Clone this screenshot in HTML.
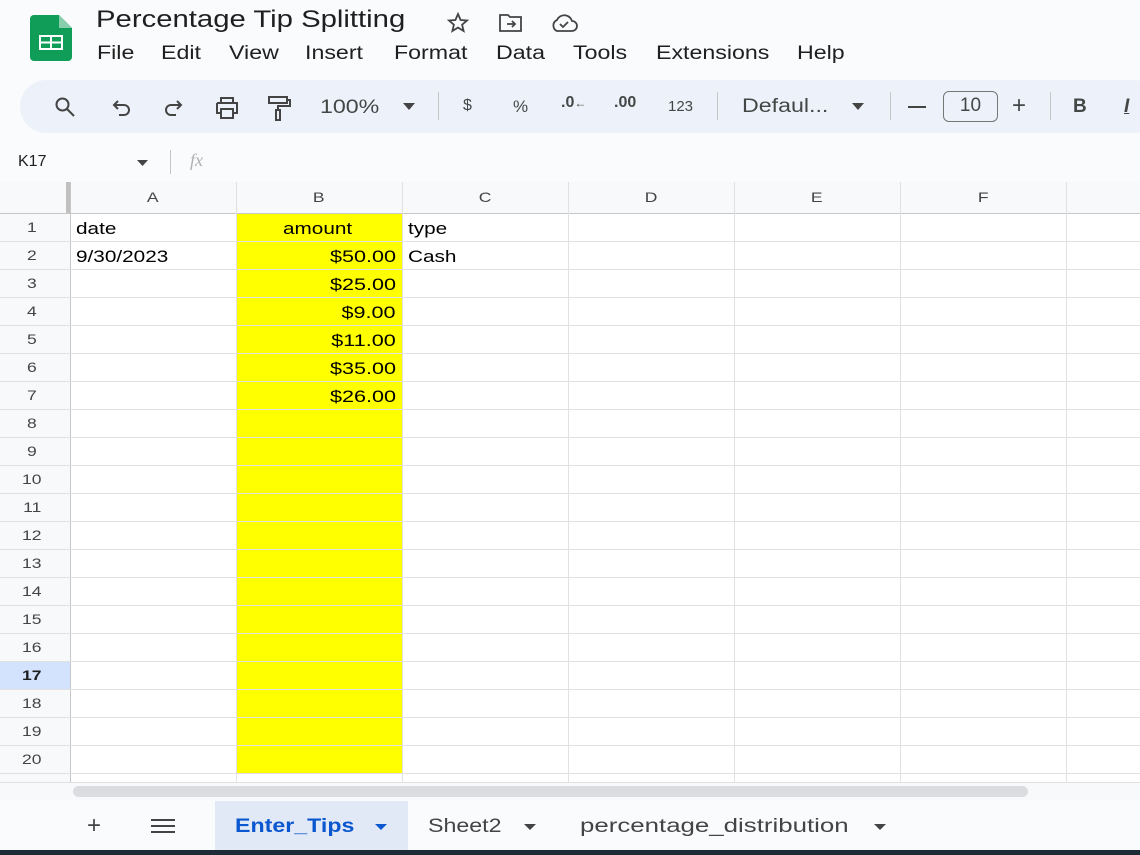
<!DOCTYPE html>
<html><head><meta charset="utf-8"><style>
*{margin:0;padding:0;box-sizing:border-box}
body{width:1140px;height:855px;overflow:hidden;background:#f9fbfd;font-family:"Liberation Sans",Arial,sans-serif;color:#1f1f1f;position:relative}
.abs{position:absolute;white-space:nowrap}
.s{display:inline-block;transform:scaleX(1.22);transform-origin:left center}
.sr{display:inline-block;transform:scaleX(1.27);transform-origin:right center}
.sc{display:inline-block;transform:scaleX(1.25);transform-origin:center center}
.title{left:96px;top:6px;font-size:24px;color:#1f1f1f}
.menu{top:43px;font-size:19px;color:#1f1f1f}
.pill{left:20px;top:80px;width:1140px;height:53px;background:#edf2fa;border-radius:27px}
.tb{top:94px;font-size:19px;color:#444746}
.sep{top:92px;width:1px;height:28px;background:#c4c7c5}
.grid{left:0;top:182px;width:1140px;height:600px;background:#fff;overflow:hidden}
.tabs{left:0;top:800px;width:1140px;height:50px;background:#f9fbfd}
.c{font-size:17px;color:#000}
.rh{width:64px;text-align:center;font-size:14px;color:#444}
.ch{width:166px;text-align:center;font-size:14px;color:#444;top:189px}
.r{width:160px;text-align:right}
</style></head><body>
<svg class="abs" style="left:30px;top:15px" width="42" height="46" viewBox="0 0 42 46"><path d="M4 0h25l13 13v29a4 4 0 0 1-4 4H4a4 4 0 0 1-4-4V4a4 4 0 0 1 4-4z" fill="#0f9d58"/><path d="M29 0l13 13H29z" fill="#87ceac"/><rect x="9" y="20" width="24" height="15" fill="#fff"/><rect x="11" y="22" width="9" height="4.5" fill="#0f9d58"/><rect x="22" y="22" width="9" height="4.5" fill="#0f9d58"/><rect x="11" y="28.5" width="9" height="4.5" fill="#0f9d58"/><rect x="22" y="28.5" width="9" height="4.5" fill="#0f9d58"/></svg>
<div class="abs title"><span class="s">Percentage Tip Splitting</span></div>
<svg class="abs" style="left:446px;top:11px" width="24" height="24" viewBox="0 0 24 24" fill="none" stroke="#444" stroke-width="1.8"><path d="M12 3l2.6 6 6.4.5-4.9 4.2 1.5 6.3L12 16.6 6.4 20l1.5-6.3L3 9.5l6.4-.5z"/></svg>
<svg class="abs" style="left:498px;top:12px" width="26" height="22" viewBox="0 0 26 22" fill="none" stroke="#444" stroke-width="1.8"><path d="M2 3h8l2 2h11v14H2z M9 12h8 M14 9l3 3-3 3"/></svg>
<svg class="abs" style="left:549px;top:12px" width="30" height="22" viewBox="0 0 30 22" fill="none" stroke="#444" stroke-width="1.8"><path d="M8 19h15a5 5 0 0 0 0-10 8 8 0 0 0-15-1 6 6 0 0 0 0 11z M11 12l3 3 5-5"/></svg>
<div class="abs menu" style="left:97px"><span class="s">File</span></div>
<div class="abs menu" style="left:161px"><span class="s">Edit</span></div>
<div class="abs menu" style="left:229px"><span class="s">View</span></div>
<div class="abs menu" style="left:305px"><span class="s">Insert</span></div>
<div class="abs menu" style="left:394px"><span class="s">Format</span></div>
<div class="abs menu" style="left:496px"><span class="s">Data</span></div>
<div class="abs menu" style="left:573px"><span class="s">Tools</span></div>
<div class="abs menu" style="left:656px"><span class="s">Extensions</span></div>
<div class="abs menu" style="left:797px"><span class="s">Help</span></div>
<div class="abs pill"></div>
<svg class="abs" style="left:54px;top:96px" width="22" height="22" viewBox="0 0 22 22" fill="none" stroke="#444" stroke-width="2"><circle cx="8.5" cy="8.5" r="6"/><path d="M13 13l7 7"/></svg>
<svg class="abs" style="left:111px;top:97px" width="22" height="22" viewBox="0 0 22 22" fill="none" stroke="#444" stroke-width="2"><path d="M7 4L3 8l4 4M3 8h10a5 5 0 0 1 0 10H8"/></svg>
<svg class="abs" style="left:162px;top:97px" width="22" height="22" viewBox="0 0 22 22" fill="none" stroke="#444" stroke-width="2"><path d="M15 4l4 4-4 4M19 8H9a5 5 0 0 0 0 10h5"/></svg>
<svg class="abs" style="left:214px;top:96px" width="26" height="24" viewBox="0 0 26 24" fill="none" stroke="#444" stroke-width="2"><path d="M7 7V2h12v5M3 7h20v10h-4M7 17H3V7M7 13h12v9H7z"/></svg>
<svg class="abs" style="left:266px;top:94px" width="26" height="28" viewBox="0 0 26 28" fill="none" stroke="#444" stroke-width="2"><path d="M3 3h18v6H3zM21 6h3v6H12v4M10 16h4v10h-4z"/></svg>
<div class="abs tb" style="left:320px;top:97px"><span class="s">100%</span></div>
<svg class="abs" style="left:403px;top:103px" width="12" height="7"><path d="M0 0h12L6 7z" fill="#444"/></svg>
<div class="abs sep" style="left:438px"></div>
<div class="abs tb" style="left:463px;top:97px;font-size:16px">$</div>
<div class="abs tb" style="left:513px;top:97px;font-size:17px">%</div>
<div class="abs tb" style="left:561px;top:94px;font-size:16px;font-weight:bold">.0<span style="font-size:12px">←</span></div>
<div class="abs tb" style="left:614px;top:94px;font-size:16px;font-weight:bold">.00</div>
<div class="abs tb" style="left:668px;top:98px;font-size:15px">123</div>
<div class="abs sep" style="left:717px"></div>
<div class="abs tb" style="left:742px;top:96px"><span class="s">Defaul...</span></div>
<svg class="abs" style="left:852px;top:103px" width="12" height="7"><path d="M0 0h12L6 7z" fill="#444"/></svg>
<div class="abs sep" style="left:890px"></div>
<div class="abs" style="left:908px;top:106px;width:18px;height:2px;background:#444"></div>
<div class="abs" style="left:943px;top:91px;width:55px;height:31px;border:1.5px solid #747775;border-radius:6px;font-size:19px;color:#444746;text-align:center;line-height:28px">10</div>
<div class="abs tb" style="left:1012px;top:92px;font-size:24px">+</div>
<div class="abs sep" style="left:1050px"></div>
<div class="abs tb" style="left:1073px;top:96px;font-weight:bold">B</div>
<div class="abs tb" style="left:1124px;top:96px;font-style:italic;font-weight:bold;text-decoration:underline">I</div>
<div class="abs" style="left:18px;top:153px;font-size:16px">K17</div>
<svg class="abs" style="left:137px;top:160px" width="11" height="6"><path d="M0 0h11L5.5 6z" fill="#444"/></svg>
<div class="abs" style="left:170px;top:150px;width:1px;height:24px;background:#c4c7c5"></div>
<div class="abs" style="left:190px;top:150px;font-size:18px;color:#b0b0b0;font-style:italic;font-family:'Liberation Serif',serif">fx</div>
<svg class="abs grid" width="1140" height="600" viewBox="0 0 1140 600">
<rect x="0" y="0" width="1140" height="31" fill="#f8f9fa"/>
<rect x="0" y="0" width="70" height="600" fill="#f8f9fa"/>
<rect x="236" y="31" width="166" height="560" fill="#ffff00"/>
<rect x="0" y="479" width="70" height="28" fill="#d3e3fd"/>
<rect x="66" y="0" width="5" height="31" fill="#c0c0c0"/>
<g stroke="#e1e1e1" stroke-width="1">
<line x1="0" y1="31.5" x2="1140" y2="31.5" stroke="#c7c7c7"/>
<line x1="70.5" y1="0" x2="70.5" y2="600" stroke="#c7c7c7"/>
<line x1="236.5" y1="0" x2="236.5" y2="600"/><line x1="402.5" y1="0" x2="402.5" y2="600"/><line x1="568.5" y1="0" x2="568.5" y2="600"/><line x1="734.5" y1="0" x2="734.5" y2="600"/><line x1="900.5" y1="0" x2="900.5" y2="600"/><line x1="1066.5" y1="0" x2="1066.5" y2="600"/>
<path d="M0 59.5H1140M0 87.5H1140M0 115.5H1140M0 143.5H1140M0 171.5H1140M0 199.5H1140M0 227.5H1140M0 255.5H1140M0 283.5H1140M0 311.5H1140M0 339.5H1140M0 367.5H1140M0 395.5H1140M0 423.5H1140M0 451.5H1140M0 479.5H1140M0 507.5H1140M0 535.5H1140M0 563.5H1140M0 591.5H1140"/>
</g>
</svg>
<div class="abs ch" style="left:70px"><span class="sc">A</span></div>
<div class="abs ch" style="left:236px"><span class="sc">B</span></div>
<div class="abs ch" style="left:402px"><span class="sc">C</span></div>
<div class="abs ch" style="left:568px"><span class="sc">D</span></div>
<div class="abs ch" style="left:734px"><span class="sc">E</span></div>
<div class="abs ch" style="left:900px"><span class="sc">F</span></div>
<div class="abs rh" style="left:0;top:219px"><span class="sc">1</span></div>
<div class="abs rh" style="left:0;top:247px"><span class="sc">2</span></div>
<div class="abs rh" style="left:0;top:275px"><span class="sc">3</span></div>
<div class="abs rh" style="left:0;top:303px"><span class="sc">4</span></div>
<div class="abs rh" style="left:0;top:331px"><span class="sc">5</span></div>
<div class="abs rh" style="left:0;top:359px"><span class="sc">6</span></div>
<div class="abs rh" style="left:0;top:387px"><span class="sc">7</span></div>
<div class="abs rh" style="left:0;top:415px"><span class="sc">8</span></div>
<div class="abs rh" style="left:0;top:443px"><span class="sc">9</span></div>
<div class="abs rh" style="left:0;top:471px"><span class="sc">10</span></div>
<div class="abs rh" style="left:0;top:499px"><span class="sc">11</span></div>
<div class="abs rh" style="left:0;top:527px"><span class="sc">12</span></div>
<div class="abs rh" style="left:0;top:555px"><span class="sc">13</span></div>
<div class="abs rh" style="left:0;top:583px"><span class="sc">14</span></div>
<div class="abs rh" style="left:0;top:611px"><span class="sc">15</span></div>
<div class="abs rh" style="left:0;top:639px"><span class="sc">16</span></div>
<div class="abs rh" style="left:0;top:667px;font-weight:bold;color:#1f1f1f"><span class="sc">17</span></div>
<div class="abs rh" style="left:0;top:695px"><span class="sc">18</span></div>
<div class="abs rh" style="left:0;top:723px"><span class="sc">19</span></div>
<div class="abs rh" style="left:0;top:751px"><span class="sc">20</span></div>
<div class="abs c" style="left:76px;top:219px"><span class="s">date</span></div>
<div class="abs c" style="left:283px;top:219px"><span class="s">amount</span></div>
<div class="abs c" style="left:408px;top:219px"><span class="s">type</span></div>
<div class="abs c" style="left:76px;top:247px"><span class="s">9/30/2023</span></div>
<div class="abs c" style="left:408px;top:247px"><span class="s">Cash</span></div>
<div class="abs c r" style="left:236px;top:247px"><span class="sr">$50.00</span></div>
<div class="abs c r" style="left:236px;top:275px"><span class="sr">$25.00</span></div>
<div class="abs c r" style="left:236px;top:303px"><span class="sr">$9.00</span></div>
<div class="abs c r" style="left:236px;top:331px"><span class="sr">$11.00</span></div>
<div class="abs c r" style="left:236px;top:359px"><span class="sr">$35.00</span></div>
<div class="abs c r" style="left:236px;top:387px"><span class="sr">$26.00</span></div>
<div class="abs" style="left:0;top:782px;width:1140px;height:18px;background:#f8f9fa;border-top:1px solid #e1e1e1"></div>
<div class="abs" style="left:73px;top:786px;width:955px;height:11px;background:#dadce0;border-radius:6px"></div>
<div class="abs tabs"></div>
<div class="abs" style="left:87px;top:812px;font-size:24px;color:#444">+</div>
<div class="abs" style="left:151px;top:819px;width:24px;height:2px;background:#444;box-shadow:0 6px 0 #444,0 12px 0 #444"></div>
<div class="abs" style="left:215px;top:801px;width:193px;height:49px;background:#e1e9f7"></div>
<div class="abs" style="left:235px;top:816px;font-size:19px;color:#0b57d0;font-weight:bold"><span class="s">Enter_Tips</span></div>
<svg class="abs" style="left:375px;top:824px" width="12" height="6"><path d="M0 0h12L6 6z" fill="#0b57d0"/></svg>
<div class="abs" style="left:428px;top:816px;font-size:19px;color:#444"><span class="s">Sheet2</span></div>
<svg class="abs" style="left:524px;top:824px" width="12" height="6"><path d="M0 0h12L6 6z" fill="#444"/></svg>
<div class="abs" style="left:580px;top:816px;font-size:19px;color:#444"><span class="s" style="transform:scaleX(1.36)">percentage_distribution</span></div>
<svg class="abs" style="left:874px;top:824px" width="12" height="6"><path d="M0 0h12L6 6z" fill="#444"/></svg>
<div class="abs" style="left:0;top:850px;width:1140px;height:5px;background:#1e2a36"></div>
</body></html>
